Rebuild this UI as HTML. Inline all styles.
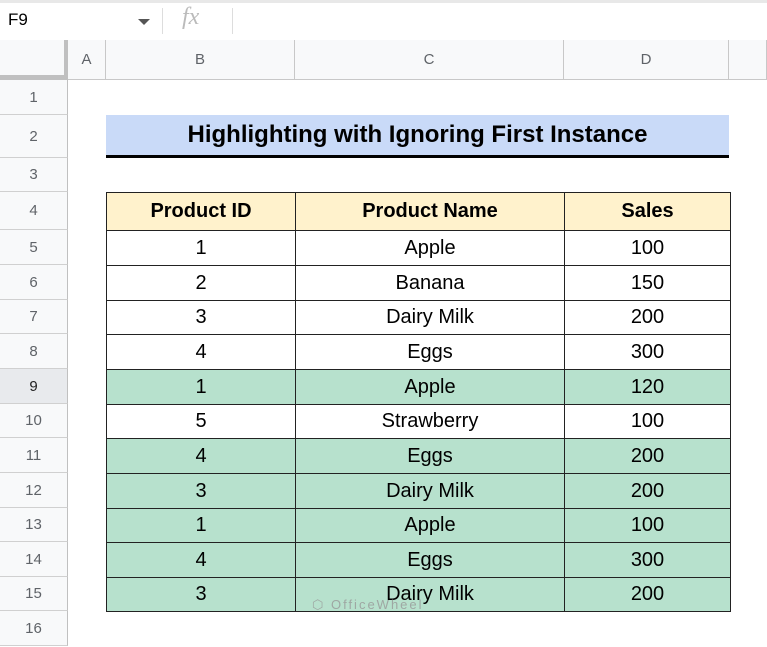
<!DOCTYPE html><html><head><style>
body{margin:0;width:767px;height:647px;overflow:hidden;background:#fff;font-family:"Liberation Sans",Arial,sans-serif;position:relative}
.a{position:absolute;box-sizing:border-box}
.rh{left:0;width:68px;background:#f8f9fa;border-bottom:1px solid #d0d0d0;border-right:1px solid #c0c0c0;color:#5f6368;font-size:15px;text-align:center}
.ch{top:40px;height:40px;background:#f8f9fa;border-right:1px solid #c8c8c8;border-bottom:1px solid #c8c8c8;color:#5f6368;font-size:15px;text-align:center;line-height:40px}
table{position:absolute;left:106px;top:192px;width:624px;table-layout:fixed;border-collapse:collapse;font-size:20px;color:#000}
td{border:1.5px solid #222;text-align:center;padding:0}
</style></head><body>
<div class="a" style="left:0;top:0;width:767px;height:3px;background:#e8e8e8"></div>
<div class="a" style="left:8px;top:10px;font-size:17px;color:#000">F9</div>
<div class="a" style="left:138px;top:19px;width:0;height:0;border-left:6px solid transparent;border-right:6px solid transparent;border-top:6px solid #555"></div>
<div class="a" style="left:162px;top:8px;width:1px;height:26px;background:#ddd"></div>
<div class="a" style="left:182px;top:4px;font-size:24px;color:#bbb;font-family:'Liberation Serif',serif;font-style:italic">fx</div>
<div class="a" style="left:232px;top:8px;width:1px;height:26px;background:#ddd"></div>
<div class="a" style="left:0;top:40px;width:767px;height:1px;background:#d0d0d0"></div>
<div class="a" style="left:0;top:40px;width:68px;height:40px;background:#f8f9fa;border-right:4px solid #c0c0c0;border-bottom:5px solid #c0c0c0"></div>
<div class="a ch" style="left:68px;width:38px">A</div>
<div class="a ch" style="left:106px;width:189px">B</div>
<div class="a ch" style="left:295px;width:269px">C</div>
<div class="a ch" style="left:564px;width:165px">D</div>
<div class="a ch" style="left:729px;width:38px"></div>
<div class="a rh" style="top:80px;height:35px;line-height:35px">1</div>
<div class="a rh" style="top:115px;height:43px;line-height:43px">2</div>
<div class="a rh" style="top:158px;height:34px;line-height:34px">3</div>
<div class="a rh" style="top:192px;height:38px;line-height:38px">4</div>
<div class="a rh" style="top:230px;height:35px;line-height:35px">5</div>
<div class="a rh" style="top:265px;height:35px;line-height:35px">6</div>
<div class="a rh" style="top:300px;height:34px;line-height:34px">7</div>
<div class="a rh" style="top:334px;height:35px;line-height:35px">8</div>
<div class="a rh" style="top:369px;height:35px;line-height:35px;background:#e8eaed;color:#222">9</div>
<div class="a rh" style="top:404px;height:34px;line-height:34px">10</div>
<div class="a rh" style="top:438px;height:35px;line-height:35px">11</div>
<div class="a rh" style="top:473px;height:35px;line-height:35px">12</div>
<div class="a rh" style="top:508px;height:34px;line-height:34px">13</div>
<div class="a rh" style="top:542px;height:35px;line-height:35px">14</div>
<div class="a rh" style="top:577px;height:34px;line-height:34px">15</div>
<div class="a rh" style="top:611px;height:35px;line-height:35px">16</div>
<div class="a" style="left:106px;top:115px;width:623px;height:43px;background:#c9daf8;border-bottom:3px solid #000;text-align:center;font-weight:bold;font-size:24px;line-height:40px">Highlighting with Ignoring First Instance</div>
<table>
<colgroup><col style="width:189px"><col style="width:269px"><col style="width:166px"></colgroup>
<tr style="height:38px;background:#fff2cc;font-weight:bold"><td>Product ID</td><td>Product Name</td><td>Sales</td></tr>
<tr style="height:35px"><td>1</td><td>Apple</td><td>100</td></tr>
<tr style="height:35px"><td>2</td><td>Banana</td><td>150</td></tr>
<tr style="height:34px"><td>3</td><td>Dairy Milk</td><td>200</td></tr>
<tr style="height:35px"><td>4</td><td>Eggs</td><td>300</td></tr>
<tr style="height:35px;background:#b7e1cd"><td>1</td><td>Apple</td><td>120</td></tr>
<tr style="height:34px"><td>5</td><td>Strawberry</td><td>100</td></tr>
<tr style="height:35px;background:#b7e1cd"><td>4</td><td>Eggs</td><td>200</td></tr>
<tr style="height:35px;background:#b7e1cd"><td>3</td><td>Dairy Milk</td><td>200</td></tr>
<tr style="height:34px;background:#b7e1cd"><td>1</td><td>Apple</td><td>100</td></tr>
<tr style="height:35px;background:#b7e1cd"><td>4</td><td>Eggs</td><td>300</td></tr>
<tr style="height:34px;background:#b7e1cd"><td>3</td><td>Dairy Milk</td><td>200</td></tr>
</table>
<div class="a" style="left:312px;top:597px;font-size:13px;color:#999;letter-spacing:2px;opacity:.8">⬡ OfficeWheel</div>
</body></html>
